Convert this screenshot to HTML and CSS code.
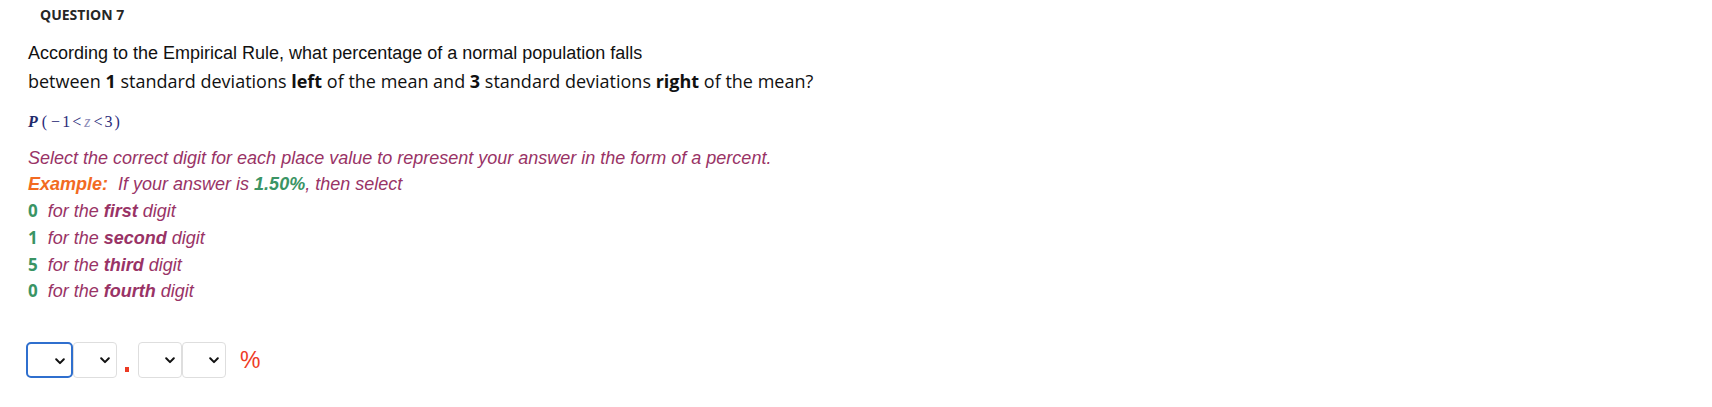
FILE: index.html
```
<!DOCTYPE html>
<html>
<head>
<meta charset="utf-8">
<link rel="stylesheet" href="styles.css">
</head>
<body>
<div class="question">
  <div class="qtitle">QUESTION 7</div>
  <div class="qbody">
    <p class="line1">According to the Empirical Rule, what percentage of a normal population falls</p>
    <p class="line2">between <b>1</b> standard deviations <b>left</b> of the mean and <b>3</b> standard deviations <b>right</b> of the mean?</p>
    <p class="math"><span class="mvar">P</span><span class="mop">(</span><span class="mop">&#8722;</span><span class="mnum">1</span><span class="mop">&lt;</span><span class="mz">z</span><span class="mop">&lt;</span><span class="mnum">3</span><span class="mop">)</span></p>
    <div class="instr">
      <p class="row">Select the correct digit for each place value to represent your answer in the form of a percent.</p>
      <p class="row"><b class="orange">Example:</b>&nbsp; If your answer is <b class="green">1.50%</b>, then select</p>
      <p class="row"><span class="digit">0</span>&nbsp; for the <b>first</b> digit</p>
      <p class="row"><span class="digit">1</span>&nbsp; for the <b>second</b> digit</p>
      <p class="row"><span class="digit">5</span>&nbsp; for the <b>third</b> digit</p>
      <p class="row"><span class="digit">0</span>&nbsp; for the <b>fourth</b> digit</p>
    </div>
    <div class="answer">
      <div class="sel focus"><svg class="chev" width="10" height="7" viewBox="0 0 10 7"><path d="M1.2 1.3 L5 5.1 L8.8 1.3" fill="none" stroke="#111" stroke-width="2" stroke-linecap="round" stroke-linejoin="round"/></svg></div>
      <div class="sel"><svg class="chev" width="10" height="7" viewBox="0 0 10 7"><path d="M1.2 1.3 L5 5.1 L8.8 1.3" fill="none" stroke="#111" stroke-width="2" stroke-linecap="round" stroke-linejoin="round"/></svg></div>
      <span class="dot"></span>
      <div class="sel"><svg class="chev" width="10" height="7" viewBox="0 0 10 7"><path d="M1.2 1.3 L5 5.1 L8.8 1.3" fill="none" stroke="#111" stroke-width="2" stroke-linecap="round" stroke-linejoin="round"/></svg></div>
      <div class="sel"><svg class="chev" width="10" height="7" viewBox="0 0 10 7"><path d="M1.2 1.3 L5 5.1 L8.8 1.3" fill="none" stroke="#111" stroke-width="2" stroke-linecap="round" stroke-linejoin="round"/></svg></div>
      <span class="pct">%</span>
    </div>
  </div>
</div>
</body>
</html>
```
FILE: styles.css
```
html, body {
  margin: 0;
  padding: 0;
  background: #fff;
}
.question {
  padding-top: 5px;
}
.qtitle {
  font-family: "Open Sans", sans-serif;
  font-weight: 700;
  font-size: 14px;
  line-height: 20px;
  color: #262626;
  padding-left: 40px;
}
.qbody {
  padding-left: 28px;
  padding-top: 15px;
}
.qbody p {
  margin: 0;
}
.line1 {
  font-family: "Liberation Sans", Arial, sans-serif;
  font-size: 18px;
  line-height: 27px;
  color: #111;
}
.line2 {
  font-family: "Open Sans", sans-serif;
  font-size: 18px;
  line-height: 28px;
  color: #111;
}
.line2 b {
  font-weight: 700;
}
.math {
  font-family: "Liberation Serif", "Times New Roman", serif;
  font-size: 16px;
  line-height: 20px;
  color: #2b2b7a;
  margin-top: 17px !important;
}
.mvar {
  font-weight: 700;
  font-style: italic;
  color: #1f2a6b;
  margin-right: 2px;
}
.mop {
  margin: 0 2px;
}
.mz {
  font-style: italic;
  color: #8d8db8;
  margin: 0 1px;
}
.instr {
  margin-top: 12.5px;
  font-family: "Liberation Sans", Arial, sans-serif;
  font-style: italic;
  font-size: 18px;
  color: #993366;
}
.row {
  line-height: 26.8px;
}
.orange {
  color: #f26a22;
}
.green {
  color: #3a9464;
}
.digit {
  font-family: "Open Sans", sans-serif;
  font-style: normal;
  font-weight: 700;
  font-size: 17px;
  color: #3a9464;
}
.answer {
  margin-top: 37px;
  margin-left: -2px;
  display: flex;
  align-items: center;
  height: 36px;
}
.sel {
  position: relative;
  box-sizing: border-box;
  width: 44px;
  height: 36px;
  border: 1px solid #dedede;
  border-radius: 4px;
  background: #fff;
}
.sel.focus {
  width: 47px;
  border: 2px solid #2f6fce;
  border-radius: 5px;
}
.chev {
  position: absolute;
  right: 6px;
  top: 14px;
}
.dot {
  width: 4px;
  height: 5px;
  background: #ec3b24;
  margin: 19px 9px 0 8px;
}
.pct {
  font-family: "Liberation Sans", Arial, sans-serif;
  font-size: 23px;
  color: #ee3c26;
  margin-left: 14px;
  line-height: 36px;
}
```
